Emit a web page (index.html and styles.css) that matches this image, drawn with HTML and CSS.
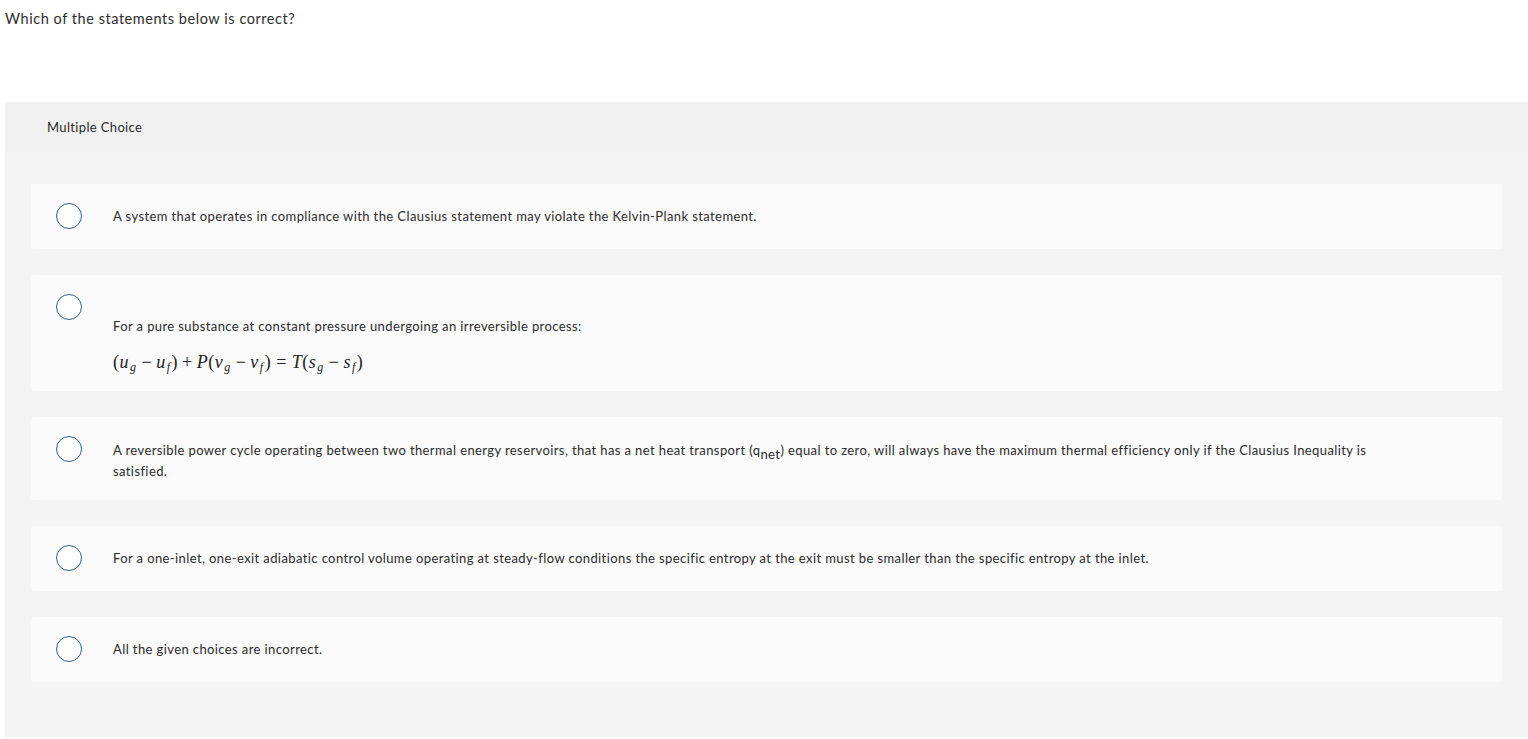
FILE: index.html
```html
<!DOCTYPE html>
<html>
<head>
<meta charset="utf-8">
<link rel="stylesheet" href="styles.css">
</head>
<body>
<div class="question">Which of the statements below is correct?</div>
<div class="panel">
  <div class="panel-head">Multiple Choice</div>
  <div class="panel-body">
    <div class="choice">
      <span class="radio"></span>
      <div class="choice-text"><p>A system that operates in compliance with the Clausius statement may violate the Kelvin-Plank statement.</p></div>
    </div>
    <div class="choice">
      <span class="radio"></span>
      <div class="choice-text multi">
        <p class="lead">For a pure substance at constant pressure undergoing an irreversible process:</p>
        <p class="math">(<i>u</i><sub>g</sub><span class="op">−</span><i>u</i><sub>f</sub>)<span class="op">+</span><i>P</i>(<i>v</i><sub>g</sub><span class="op">−</span><i>v</i><sub>f</sub>)<span class="rel">=</span><i>T</i>(<i>s</i><sub>g</sub><span class="op">−</span><i>s</i><sub>f</sub>)</p>
      </div>
    </div>
    <div class="choice">
      <span class="radio"></span>
      <div class="choice-text two"><p>A reversible power cycle operating between two thermal energy reservoirs, that has a net heat transport (q<sub class="net">net</sub>) equal to zero, will always have the maximum thermal efficiency only if the Clausius Inequality is satisfied.</p></div>
    </div>
    <div class="choice">
      <span class="radio"></span>
      <div class="choice-text"><p>For a one-inlet, one-exit adiabatic control volume operating at steady-flow conditions the specific entropy at the exit must be smaller than the specific entropy at the inlet.</p></div>
    </div>
    <div class="choice">
      <span class="radio"></span>
      <div class="choice-text"><p>All the given choices are incorrect.</p></div>
    </div>
  </div>
</div>
</body>
</html>
```

FILE: styles.css
```css
html, body {
  margin: 0;
  padding: 0;
  background: #ffffff;
}
body {
  font-family: "Lato", "Open Sans", "Liberation Sans", sans-serif;
  color: #333333;
}
.question {
  padding: 10px 0 0 5px;
  font-size: 14.5px;
  letter-spacing: 0.55px;
  line-height: 18px;
  box-sizing: border-box;
  height: 102px;
  color: #2e2e2e;
}
.panel {
  margin-left: 5px;
  border-radius: 3px 0 0 3px;
  overflow: hidden;
  background: #f4f4f4;
}
.panel-head {
  background: #f0f0f0;
  height: 50px;
  display: flex;
  align-items: center;
  padding-left: 42px;
  font-size: 13px;
  letter-spacing: 0.35px;
  color: #2b2b2b;
}
.panel-body {
  padding: 32px 26px 55px 26px;
  display: flex;
  flex-direction: column;
  gap: 26px;
}
.choice {
  background: #fafafa;
  border-radius: 3px;
  display: flex;
  align-items: flex-start;
  padding: 22px 100px 22px 25px;
}
.radio {
  flex: none;
  width: 24px;
  height: 24px;
  border: 1.5px solid #2f5f8f;
  border-radius: 50%;
  background: #ffffff;
  margin-top: -3px;
  margin-bottom: -6px;
  margin-right: 31px;
}
.choice-text {
  flex: 1;
  font-size: 13px;
  letter-spacing: 0.4px;
  line-height: 21px;
  color: #2b2b2b;
}
.choice-text p {
  margin: 0;
}
.choice-text.multi {
  padding-top: 19px;
  margin-bottom: -4px;
}
.choice-text.two {
  padding-top: 1px;
  margin-bottom: -4px;
}
.choice-text .math {
  margin-top: 14px;
  font-family: "Liberation Serif", "DejaVu Serif", serif;
  font-size: 18px;
  letter-spacing: 0.5px;
  line-height: 22px;
  color: #222222;
}
.math i {
  font-style: italic;
}
.math sub {
  font-style: italic;
  font-size: 12px;
  line-height: 0;
  vertical-align: -3px;
  margin-left: 1px;
  margin-right: 1px;
}
.math .op {
  margin: 0 4px;
}
.math .rel {
  margin: 0 5px;
}
sub.net {
  font-size: 13px;
  line-height: 0;
  vertical-align: baseline;
  position: relative;
  top: 4px;
}
```
